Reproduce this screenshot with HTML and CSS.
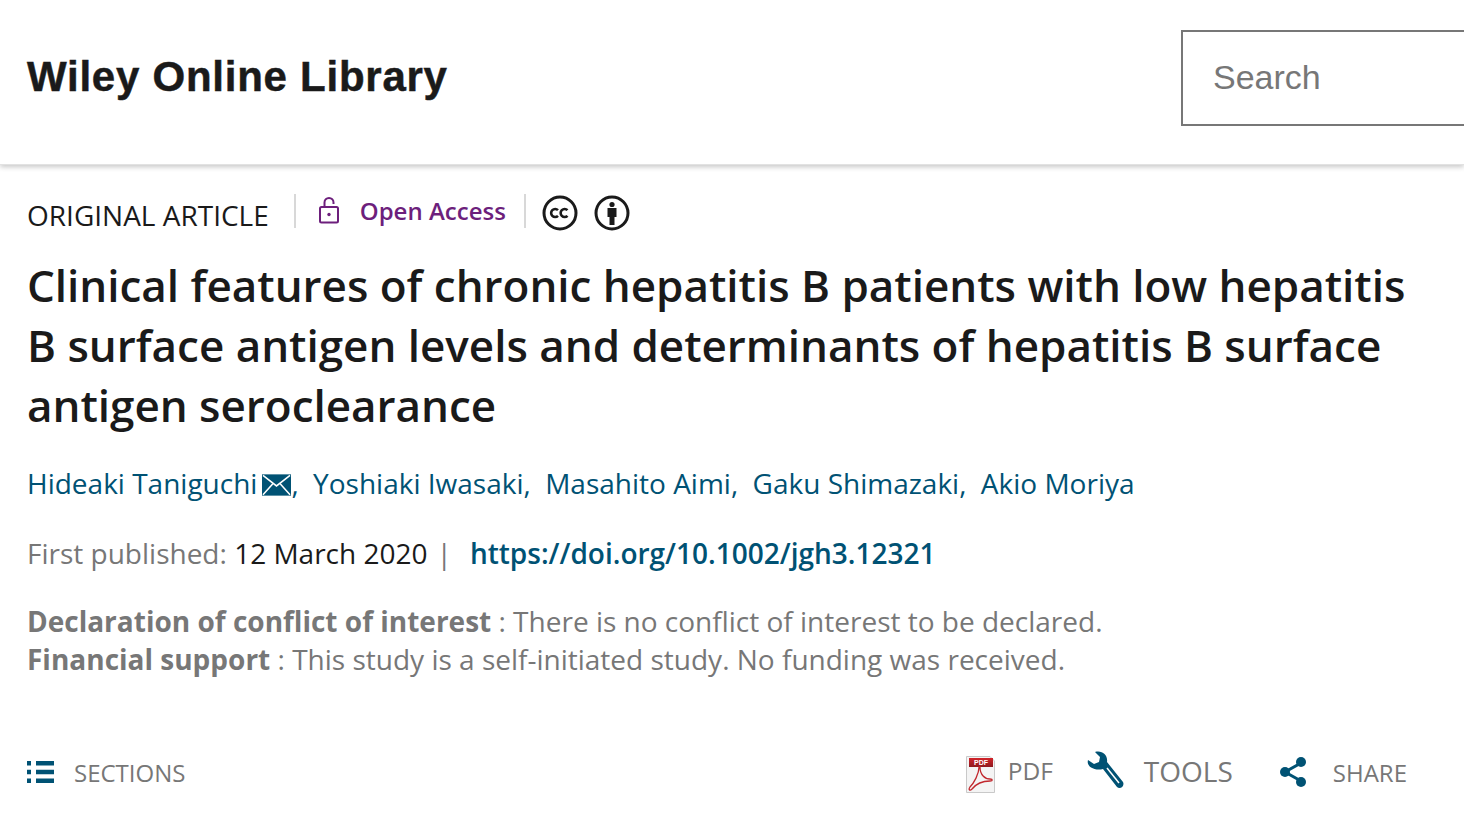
FILE: index.html
```html
<!DOCTYPE html>
<html lang="en">
<head>
<meta charset="utf-8">
<title>Wiley Online Library</title>
<link rel="stylesheet" href="styles.css">
</head>
<body>
<header class="site-header">
  <div class="logo">Wiley Online Library</div>
  <div class="search">Search</div>
</header>
<main class="article">
  <div class="meta-row">
    <span class="article-type">ORIGINAL ARTICLE</span>
    <span class="access">
      <svg class="lock" viewBox="0 0 20 27" width="20" height="27" aria-hidden="true"><path d="M5.500 10V5.500a4.500 4.500 0 0 1 9 0V7" fill="none" stroke="#6d1f7c" stroke-width="2"/><rect x="1" y="10" width="18" height="15.500" rx="1.500" fill="none" stroke="#6d1f7c" stroke-width="2"/><circle cx="10" cy="17.500" r="1.700" fill="#6d1f7c"/></svg>
      <span class="access-text">Open Access</span>
    </span>
    <span class="licence">
      <svg viewBox="0 0 36 36" width="36" height="36" aria-hidden="true"><circle cx="18" cy="18" r="16" fill="#fff" stroke="#1a1a1a" stroke-width="3"/><path d="M16 15.200a4 4 0 1 0 0 5.600M25.500 15.200a4 4 0 1 0 0 5.600" fill="none" stroke="#1a1a1a" stroke-width="2.600"/></svg>
      <svg viewBox="0 0 36 36" width="36" height="36" aria-hidden="true"><circle cx="18" cy="18" r="16" fill="#fff" stroke="#1a1a1a" stroke-width="3"/><circle cx="18" cy="9.500" r="2.600" fill="#1a1a1a"/><path d="M13.500 13h9v9h-2v8h-5v-8h-2z" fill="#1a1a1a"/></svg>
    </span>
  </div>
  <h1 class="title">Clinical features of chronic hepatitis B patients with low hepatitis B surface antigen levels and determinants of hepatitis B surface antigen seroclearance</h1>
  <div class="authors">
    <a class="author">Hideaki Taniguchi<svg class="mail" viewBox="0 0 30 22" width="29" height="22" aria-hidden="true"><rect width="30" height="22" fill="#005274"/><path d="M1 1l14 11L29 1M1 21l10-11M29 21L19 10" fill="none" stroke="#fff" stroke-width="1.600"/></svg>,</a>
    <a class="author">Yoshiaki Iwasaki,</a>
    <a class="author">Masahito Aimi,</a>
    <a class="author">Gaku Shimazaki,</a>
    <a class="author">Akio Moriya</a>
  </div>
  <div class="pub">
    <span class="pub-label">First published:</span> <span class="pub-date">12 March 2020</span><span class="pub-sep">|</span><a class="doi">https://doi.org/10.1002/jgh3.12321</a>
  </div>
  <div class="notes">
    <p class="note"><b>Declaration of conflict of interest</b> : There is no conflict of interest to be declared.</p>
    <p class="note"><b>Financial support</b> : This study is a self-initiated study. No funding was received.</p>
  </div>
</main>
<nav class="toolbar">
  <div class="sections">
    <svg viewBox="0 0 27 22" width="27" height="22" aria-hidden="true"><path d="M0 0h4v4.500H0zM9 0h18v4.500H9zM0 8.800h4v4.500H0zM9 8.800h18v4.500H9zM0 17.500h4V22H0zM9 17.500h18V22H9z" fill="#005274"/></svg>
    <span class="sections-text">SECTIONS</span>
  </div>
  <div class="tools">
    <span class="tool tool-pdf">
      <svg class="pdf-icon" viewBox="0 0 29 37" width="29" height="37" aria-hidden="true"><defs><linearGradient id="band" x1="0" y1="0" x2="0" y2="1"><stop offset="0" stop-color="#d2232a"/><stop offset="1" stop-color="#8e1a1f"/></linearGradient></defs><path d="M.5.500H24L28.500 5V36.500H.5z" fill="#f4f4f4" stroke="#c9c9c9"/><rect x="3" y="2" width="24" height="9" fill="url(#band)"/><text class="pdf-badge" x="15" y="9">PDF</text><path d="M13 11c0 7-5 16-9 20-2 3 0 4 2 2 4-5 10-8 18-8 3 0 3-2 0-2-5 0-10-4-10-12z" fill="none" stroke="#c1272d" stroke-width="1.300"/></svg>
      <span class="pdf-text">PDF</span>
    </span>
    <span class="tool tool-tools">
      <svg viewBox="0 0 37 38" width="37" height="38" aria-hidden="true"><path d="M1 9l6 4 5-2 1-5-5-5c7-2 13 3 12 10l16 20c2 4-3 8-6 5L16 18C8 20-1 16 1 9z" fill="#005274"/><path d="M20 17l12 15" stroke="#fff" stroke-width="1.500"/></svg>
      <span class="tools-text">TOOLS</span>
    </span>
    <span class="tool tool-share">
      <svg viewBox="0 0 28 30" width="28" height="30" aria-hidden="true"><path d="M22 6L6 15l16 9" fill="none" stroke="#005274" stroke-width="3"/><circle cx="22" cy="5" r="5" fill="#005274"/><circle cx="6" cy="15" r="5" fill="#005274"/><circle cx="22" cy="25" r="5" fill="#005274"/></svg>
      <span class="share-text">SHARE</span>
    </span>
  </div>
</nav>
</body>
</html>
```
FILE: styles.css
```css
* { box-sizing: border-box; }
html, body { margin: 0; padding: 0; }
body {
  width: 1464px;
  height: 820px;
  overflow: hidden;
  background: #fff;
  font-family: "Open Sans", sans-serif;
  display: flex;
  flex-direction: column;
}
.site-header {
  height: 165px;
  flex: none;
  display: flex;
  justify-content: space-between;
  padding: 30px 0 0 27px;
  box-shadow: 0 2px 5px rgba(0,0,0,.22);
  border-bottom: 1px solid #e2e2e2;
}
.logo {
  font-family: "Liberation Sans", Arial, sans-serif;
  font-weight: 700;
  font-size: 42px;
  line-height: 94px;
  letter-spacing: .75px;
  color: #1a1a1a;
  -webkit-text-stroke: .5px #1a1a1a;
}
.search {
  width: 283px;
  height: 96px;
  border: 2px solid #777;
  border-right: 0;
  padding-left: 30px;
  font-family: "Liberation Sans", Arial, sans-serif;
  font-size: 34px;
  line-height: 90px;
  color: #777;
}
.article { padding: 29px 0 0 27px; flex: none; }
.meta-row { display: flex; align-items: flex-start; height: 40px; }
.article-type {
  font-size: 28px;
  line-height: 42px;
  color: #1a1a1a;
  padding-right: 25px;
}
.access {
  display: flex;
  align-items: center;
  height: 34px;
  border-left: 2px solid #d8d8d8;
  border-right: 2px solid #d8d8d8;
  padding: 0 18px 0 23px;
  gap: 21px;
}
.access-text { font-size: 24px; line-height: 32px; font-weight: 600; color: #6d1f7c; }
.lock { margin-bottom: 1px; }
.licence { display: flex; gap: 16px; padding: 1px 0 0 16px; }
.title {
  margin: 21px 0 0;
  width: 1400px;
  font-size: 44px;
  line-height: 60px;
  font-weight: 600;
  letter-spacing: -.02px;
  color: #1a1a1a;
}
.authors { margin-top: 26px; display: flex; gap: 14.400px; font-size: 28px; line-height: 44px; color: #005274; }
.author { display: inline-flex; align-items: center; }
.mail { margin: 3px 0 0 5px; }
.pub { margin-top: 26px; font-size: 28px; line-height: 44px; color: #1a1a1a; }
.pub-label { color: #777; }
.pub-sep { color: #777; margin: 0 18px 0 9px; }
.doi { color: #005274; font-weight: 600; }
.notes { margin-top: 27px; }
.note { margin: 0; font-size: 28px; line-height: 38px; color: #777; }
.toolbar {
  flex: none;
  margin-top: 73px;
  padding: 0 57px 0 27px;
  display: flex;
  justify-content: space-between;
  align-items: center;
}
.sections { display: flex; align-items: center; gap: 20px; }
.sections-text { font-size: 24px; color: #777; }
.tools { display: flex; align-items: center; }
.tool { display: flex; align-items: center; }
.tool-pdf { gap: 13px; }
.pdf-icon { margin-top: 4px; }
.pdf-badge { font-family: "Liberation Sans", Arial, sans-serif; font-size: 7px; font-weight: 700; fill: #fff; text-anchor: middle; }
.pdf-text { font-size: 24.500px; color: #777; margin-bottom: 4px; }
.tool-tools { gap: 20px; margin: 0 0 4px 34px; }
.tools-text { font-size: 28px; line-height: 36px; margin-top: 2px; color: #777; }
.tool-share { gap: 26px; margin-left: 46px; }
.share-text { font-size: 24px; color: #777; }
```
